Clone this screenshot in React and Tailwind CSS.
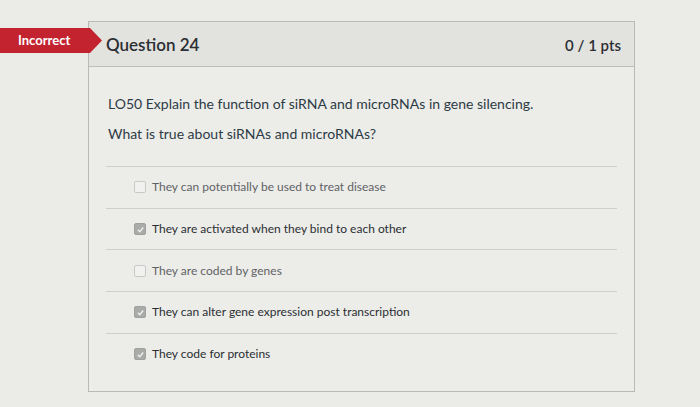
import React from 'react'

const answers = [
  { text: 'They can potentially be used to treat disease', checked: false },
  { text: 'They are activated when they bind to each other', checked: true },
  { text: 'They are coded by genes', checked: false },
  { text: 'They can alter gene expression post transcription', checked: true },
  { text: 'They code for proteins', checked: true },
]

const Box = ({ checked }) => (
  <span
    className={
      'w-[12px] h-[12px] rounded-[2px] border flex items-center justify-center shrink-0 ' +
      (checked ? 'bg-[#a9aba9] border-[#9fa19f]' : 'bg-[#f1f1ef] border-[#c9cac7]')
    }
  >
    {checked && (
      <svg viewBox="0 0 10 10" className="w-[9px] h-[9px]">
        <path d="M2 5.2 L4.2 7.4 L8 2.8" fill="none" stroke="#eeeeec" strokeWidth="1.6" />
      </svg>
    )}
  </span>
)

export default function App() {
  return (
    <div className="relative w-[700px] h-[407px] bg-[#ebebe8] pt-[21px] font-['Lato','Open_Sans',sans-serif] text-[#2d3b45] overflow-hidden">
      {/* Incorrect badge */}
      <div className="absolute left-0 top-[28px] h-[25px] w-[102px] bg-[#c3232f] text-white text-[13px] font-bold flex items-center pl-[18px] [clip-path:polygon(0_0,90px_0,102px_50%,90px_100%,0_100%)]">
        Incorrect
      </div>

      <div className="ml-[88px] w-[547px] h-[371px] border border-[#b9bab7] bg-[#ecece9]">
        {/* Header */}
        <div className="h-[45px] pt-[2px] bg-[#e2e2df] border-b border-[#bdbebb] flex items-center justify-between pl-[17px] pr-[13px]">
          <span className="text-[17px] font-semibold text-[#2b2f33]">Question 24</span>
          <span className="text-[15px] font-semibold text-[#2b2f33]">0 / 1 pts</span>
        </div>

        {/* Body */}
        <div className="px-[17px] pt-[27px]">
          <p className="text-[14px] leading-[20px] pl-[2px]">LO50 Explain the function of siRNA and microRNAs in gene silencing.</p>
          <p className="text-[14px] leading-[20px] pl-[2px] mt-[10px]">What is true about siRNAs and microRNAs?</p>

          <div className="mt-[22px]">
            {answers.map((a) => (
              <div
                key={a.text}
                className="h-[41.7px] border-t border-[#cfd0cd] flex items-center gap-[6px] pl-[28px]"
              >
                <Box checked={a.checked} />
                <span className={'text-[12px] ' + (a.checked ? 'text-[#2b2f33]' : 'text-[#5f6366]')}>
                  {a.text}
                </span>
              </div>
            ))}
          </div>
        </div>
      </div>
    </div>
  )
}
